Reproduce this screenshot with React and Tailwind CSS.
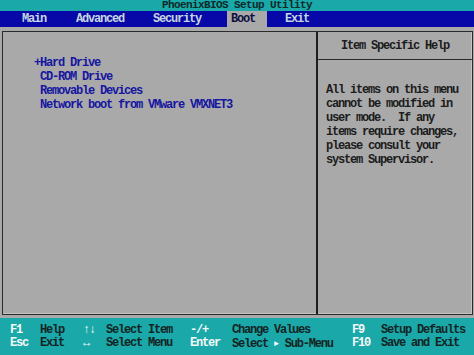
import React from "react";

const mono = { fontFamily: '"Liberation Mono", "DejaVu Sans Mono", monospace' };

const Key = ({ w, children }) => (
  <span className={`inline-block shrink-0 text-[#f4f8f8] ${w}`}>{children}</span>
);

const Desc = ({ w, children }) => (
  <span className={`inline-block shrink-0 text-[#142424] ${w}`}>{children}</span>
);

export default function App() {
  return (
    <div
      className="w-[474px] h-[355px] flex flex-col overflow-hidden bg-[#a9a9a9] text-[12px] font-bold tracking-[-1.2px]"
      style={mono}
    >
      {/* title */}
      <div className="h-[11px] bg-[#1aa8a8] text-[#0c2a2a] text-center text-[11px] tracking-[-0.6px] leading-[11px] whitespace-pre">
        PhoenixBIOS Setup Utility
      </div>

      {/* menu bar */}
      <div className="h-[16px] bg-[#0808a8] flex items-stretch leading-[16px] text-[#c4d6e0] whitespace-pre">
        <span className="w-[76px] pl-[22px]">Main</span>
        <span className="w-[77px]">Advanced</span>
        <span className="w-[74px]">Security</span>
        <span className="w-[40px] pl-[4px] bg-[#a9a9a9] text-[#101040]">Boot</span>
        <span className="pl-[18px]">Exit</span>
      </div>

      {/* body */}
      <div className="flex-1 pt-[4px] pl-[2px] pr-[1px] pb-[3px]">
        <div className="h-full flex border border-[#2a2a2a] shadow-[inset_-1px_-1px_0_#c4c4c4]">
          <div className="w-[315px] border-r-2 border-[#1e1e1e] pt-[24px] pl-[37px] leading-[14px] text-[#1616a0] whitespace-pre">
            <div className="-ml-[6px]">+Hard Drive</div>
            <div>CD-ROM Drive</div>
            <div>Removable Devices</div>
            <div>Network boot from VMware VMXNET3</div>
          </div>
          <div className="flex-1 flex flex-col text-[#1c1c1c]">
            <div className="h-[28px] border-b border-[#2a2a2a] flex items-center justify-center whitespace-pre">
              Item Specific Help
            </div>
            <div className="pt-[23px] pl-[8px] leading-[14px] whitespace-pre">
              <div>All items on this menu</div>
              <div>cannot be modified in</div>
              <div>user mode.  If any</div>
              <div>items require changes,</div>
              <div>please consult your</div>
              <div>system Supervisor.</div>
            </div>
          </div>
        </div>
      </div>

      {/* key help */}
      <div className="h-[37px] bg-[#1aa8a8] pt-[6px] pl-[10px] leading-[13px] whitespace-pre">
        <div className="flex">
          <Key w="w-[30px]">F1</Key>
          <Desc w="w-[43px]">Help</Desc>
          <Key w="w-[23px]">↑↓</Key>
          <Desc w="w-[84px]">Select Item</Desc>
          <Key w="w-[42px]">-/+</Key>
          <Desc w="w-[120px]">Change Values</Desc>
          <Key w="w-[29px]">F9</Key>
          <Desc w="w-[90px]">Setup Defaults</Desc>
        </div>
        <div className="flex">
          <Key w="w-[30px]">Esc</Key>
          <Desc w="w-[43px]">Exit</Desc>
          <Key w="w-[23px]">↔</Key>
          <Desc w="w-[84px]">Select Menu</Desc>
          <Key w="w-[42px]">Enter</Key>
          <Desc w="w-[120px]">
            Select <span className="text-[#f4f8f8] text-[8px] tracking-normal align-[1px]">►</span> Sub-Menu
          </Desc>
          <Key w="w-[29px]">F10</Key>
          <Desc w="w-[90px]">Save and Exit</Desc>
        </div>
      </div>
    </div>
  );
}
